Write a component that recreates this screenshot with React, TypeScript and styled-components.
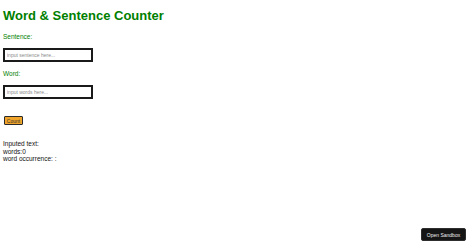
import styled, { createGlobalStyle } from "styled-components";

const GlobalStyle = createGlobalStyle`
    html, body {
        margin: 0;
        padding: 0;
        background: #ffffff;
    }
    body {
        font-family: "Liberation Sans", Arial, sans-serif;
    }
`

export default function App() {
    return (
        <>
            <GlobalStyle/>
            <Page>
                <Title>Word &amp; Sentence Counter</Title>
                <Field>
                    <Label>Sentence:</Label>
                    <TextInput type="text" placeholder="input sentence here..."/>
                </Field>
                <Field>
                    <Label>Word:</Label>
                    <TextInput type="text" placeholder="input words here..."/>
                </Field>
                <CountButton>Count</CountButton>
                <Result>
                    <ResultLine>Inputed text:</ResultLine>
                    <ResultLine>words:0</ResultLine>
                    <ResultLine>word occurrence: :</ResultLine>
                </Result>
            </Page>
            <SandboxButton>Open Sandbox</SandboxButton>
        </>
    );
}

const Page = styled.main`
    display: flex;
    flex-direction: column;
    align-items: flex-start;
    padding: 8px 3px;
`

const Title = styled.h1`
    margin: 0 0 9.5px;
    font-size: 13px;
    line-height: 15px;
    font-weight: 700;
    color: green;
`

const Field = styled.div`
    display: flex;
    flex-direction: column;
    align-items: flex-start;
    gap: 7px;
    margin-bottom: 8.5px;
`

const Label = styled.label`
    font-size: 6.5px;
    line-height: 8px;
    color: green;
`

const TextInput = styled.input`
    box-sizing: border-box;
    width: 90px;
    height: 14px;
    padding: 0 2px;
    border: 2px solid #1a1a1a;
    font-family: "Liberation Sans", Arial, sans-serif;
    font-size: 5px;
    outline: none;

    &::placeholder {
        color: #8a8a8a;
    }
`

const CountButton = styled.button`
    margin: 8.5px 0 0 1px;
    padding: 0;
    height: 9px;
    width: 19px;
    background: #f0a52a;
    border: 1.5px solid #2a2a2a;
    border-radius: 1px;
    font-family: "Liberation Sans", Arial, sans-serif;
    font-size: 5px;
    color: #333;
`

const Result = styled.div`
    margin-top: 15px;
    display: flex;
    flex-direction: column;
`

const ResultLine = styled.div`
    font-size: 6.5px;
    line-height: 7.7px;
    color: #111;
`

const SandboxButton = styled.button`
    position: fixed;
    right: 8px;
    bottom: 7px;
    width: 45px;
    height: 13px;
    padding: 0;
    background: #151515;
    border: 1px solid #2e2e2e;
    border-radius: 2px;
    color: #f0f0f0;
    font-family: "Liberation Sans", Arial, sans-serif;
    font-size: 5px;
`
